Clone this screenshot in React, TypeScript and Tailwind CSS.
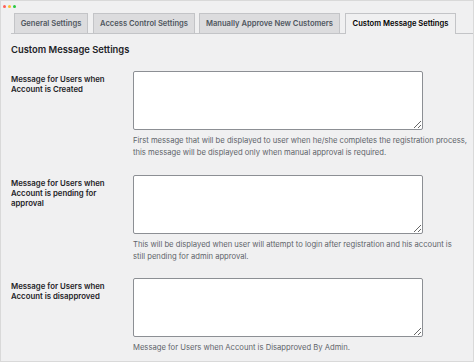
const tabs = [
  { label: "General Settings", cls: "ml-[3px] w-[74px]" },
  { label: "Access Control Settings", cls: "ml-[5px] w-[102px]" },
  { label: "Manually Approve New Customers", cls: "ml-[4px] w-[141px]" },
];

type Row = { label: string[]; desc: string[]; top: string };

const rows: Row[] = [
  {
    label: ["Message for Users when", "Account is Created"],
    desc: [
      "First message that will be displayed to user when he/she completes the registration process,",
      "this message will be displayed only when manual approval is required.",
    ],
    top: "mt-[15px]",
  },
  {
    label: ["Message for Users when", "Account is pending for", "approval"],
    desc: [
      "This will be displayed when user will attempt to login after registration and his account is",
      "still pending for admin approval.",
    ],
    top: "mt-[16px]",
  },
  {
    label: ["Message for Users when", "Account is disapproved"],
    desc: ["Message for Users when Account is Disapproved By Admin."],
    top: "mt-[15px]",
  },
];

export default function App() {
  return (
    <div
      className="w-[474px] h-[362px] overflow-hidden bg-[#f0f0f1] border border-[#d9d9d9] text-[#1d2327]"
      style={{ fontFamily: "Inter, 'Noto Sans', sans-serif" }}
    >
      {/* window chrome */}
      <div className="h-[10px] flex items-center gap-[2px] pl-[2px] pt-[1px]">
        <span className="w-[3px] h-[3px] rounded-full bg-[#fe5f57]" />
        <span className="w-[3px] h-[3px] rounded-full bg-[#febc2e]" />
        <span className="w-[3px] h-[3px] rounded-full bg-[#28c840]" />
      </div>

      {/* tabs */}
      <div className="mt-[2px] ml-[10px] flex items-end border-b border-[#c3c4c7] h-[21px]">
        {tabs.map((t) => (
          <div
            key={t.label}
            className={`${t.cls} h-[20px] flex items-center justify-center bg-[#dcdcde] border border-b-0 border-[#c3c4c7] text-[7.6px] font-semibold text-[#50575e] whitespace-nowrap`}
          >
            {t.label}
          </div>
        ))}
        <div className="ml-[5px] w-[111px] h-[21px] -mb-px flex items-center justify-center bg-[#f0f0f1] border border-b-0 border-[#c3c4c7] text-[7.6px] font-semibold text-black whitespace-nowrap">
          Custom Message Settings
        </div>
      </div>

      <h2 className="mt-[10px] ml-[10px] text-[9.4px] leading-[12px] font-semibold text-[#1d2327]">
        Custom Message Settings
      </h2>

      {rows.map((r) => (
        <div key={r.label.join()} className={`${r.top} flex`}>
          <div className="w-[132px] pl-[10px] pt-[3px] text-[7.8px] leading-[10px] font-semibold">
            {r.label.map((l) => (
              <div key={l} className="whitespace-nowrap">
                {l}
              </div>
            ))}
          </div>
          <div className="flex flex-col">
            <textarea className="w-[290px] h-[59px] bg-white border border-[#8c8f94] rounded-[2px] outline-none" />
            <div className="mt-[5px] text-[7.65px] leading-[12px] text-[#5f646a]">
              {r.desc.map((d) => (
                <div key={d} className="whitespace-nowrap">
                  {d}
                </div>
              ))}
            </div>
          </div>
        </div>
      ))}
    </div>
  );
}
